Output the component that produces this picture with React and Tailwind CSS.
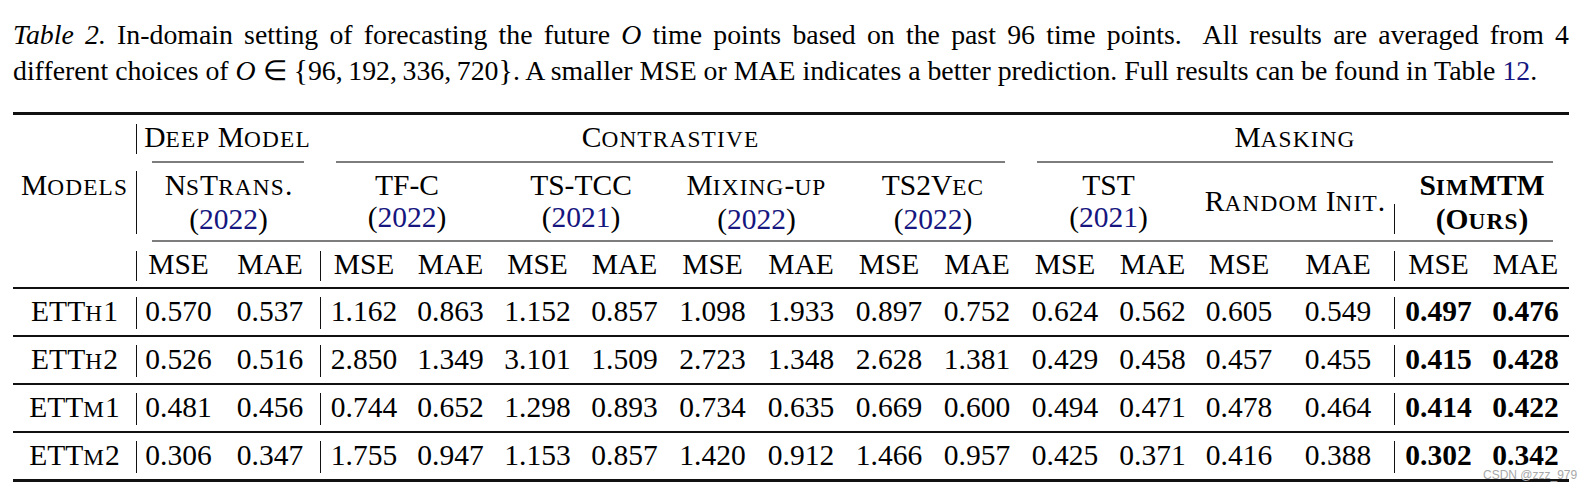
import clsx from "clsx";

const GRID =
  "grid grid-cols-[123px_84px_100px_87px_87px_87px_87px_89px_88px_88px_88px_88px_87px_86px_112px_88px_87px]";

const rows = [
  ["ETTh1", ["0.570", "0.537", "1.162", "0.863", "1.152", "0.857", "1.098", "1.933", "0.897", "0.752", "0.624", "0.562", "0.605", "0.549", "0.497", "0.476"]],
  ["ETTh2", ["0.526", "0.516", "2.850", "1.349", "3.101", "1.509", "2.723", "1.348", "2.628", "1.381", "0.429", "0.458", "0.457", "0.455", "0.415", "0.428"]],
  ["ETTm1", ["0.481", "0.456", "0.744", "0.652", "1.298", "0.893", "0.734", "0.635", "0.669", "0.600", "0.494", "0.471", "0.478", "0.464", "0.414", "0.422"]],
  ["ETTm2", ["0.306", "0.347", "1.755", "0.947", "1.153", "0.857", "1.420", "0.912", "1.466", "0.957", "0.425", "0.371", "0.416", "0.388", "0.302", "0.342"]],
];

const models = [
  { name: "NsTrans.", year: "2022" },
  { name: "TF-C", year: "2022" },
  { name: "TS-TCC", year: "2021" },
  { name: "Mixing-up", year: "2022" },
  { name: "TS2Vec", year: "2022" },
  { name: "TST", year: "2021" },
];

// lowercase letters become small capitals, the rest stays full size
function SC({ text }) {
  const parts = text.split(/([a-z]+)/);
  return (
    <span className="whitespace-pre">
      {parts.map((p, i) =>
        /^[a-z]+$/.test(p) ? (
          <span key={i} className="text-[0.79em] tracking-[0.05em]">{p.toUpperCase()}</span>
        ) : (
          <span key={i}>{p}</span>
        )
      )}
    </span>
  );
}

function Bar({ className }) {
  return <div className={clsx("w-px shrink-0 bg-[#111]", className)} />;
}

function Year({ y }) {
  return (
    <span>
      (<span className="text-[#161680]">{y}</span>)
    </span>
  );
}

function Rule({ className }) {
  return <div className={clsx("w-full bg-[#111]", className)} />;
}

function CRule({ span }) {
  return (
    <div className={clsx("px-[16px]", span)}>
      <div className="h-full bg-[#7d7d7d]" />
    </div>
  );
}

export default function App() {
  return (
    <div className="relative w-[1593px] h-[492px] overflow-hidden bg-white px-[13px] text-black [font-family:'Liberation_Serif',serif] text-[29.5px]">
      {/* caption */}
      <div className="w-[1556px] pt-[17px] text-[27.8px] leading-[35px]">
        <p className="text-justify [text-align-last:justify]">
          <i>Table 2.</i> In-domain setting of forecasting the future <i>O</i> time points based on the past 96 time
          points.&nbsp; All results are averaged from 4
        </p>
        <p className="whitespace-nowrap">
          different choices of <i>O</i> ∈ <span className="text-[1.08em]">{"{"}</span>96,{"\u2009"}192,{"\u2009"}336,
          {"\u2009"}720<span className="text-[1.08em]">{"}"}</span>. A smaller MSE or MAE indicates a better prediction.
          Full results can be found in Table <span className="text-[#161680]">12</span>.
        </p>
      </div>

      <div className="mt-[24px] w-[1556px]">
        <Rule className="h-[3px]" />

        {/* group header */}
        <div className={clsx(GRID, "h-[46px] leading-none")}>
          <div />
          <div className="col-span-2 flex">
            <Bar className="mt-[9px] mb-[7px]" />
            <div className="flex flex-1 items-center justify-center pr-[2px]">
              <SC text="Deep Model" />
            </div>
          </div>
          <div className="col-span-8 flex items-center justify-center">
            <SC text="Contrastive" />
          </div>
          <div className="col-span-6 flex items-center justify-center">
            <SC text="Masking" />
          </div>
        </div>

        <div className={clsx(GRID, "h-[2px]")}>
          <div />
          <CRule span="col-span-2" />
          <CRule span="col-span-8" />
          <CRule span="col-span-6" />
        </div>

        {/* model names */}
        <div className={clsx(GRID, "h-[77px] leading-[32px]")}>
          <div className="flex justify-center pt-[6px]">
            <SC text="Models" />
          </div>
          {models.map((m, i) => (
            <div key={m.name} className="col-span-2 flex">
              {i === 0 && <Bar className="mt-[8px] mb-[6px]" />}
              <div className="flex flex-1 flex-col items-center pt-[6px]">
                <SC text={m.name} />
                <Year y={m.year} />
              </div>
            </div>
          ))}
          <div className="col-span-2 flex items-center justify-center">
            <SC text="Random Init." />
          </div>
          <div className="col-span-2 flex">
            <Bar className="mt-[41px] mb-[6px]" />
            <div className="flex flex-1 flex-col items-center pt-[6px] font-bold">
              <SC text="SimMTM" />
              <SC text="(Ours)" />
            </div>
          </div>
        </div>

        <div className={clsx(GRID, "h-[2px]")}>
          <div />
          <CRule span="col-span-16" />
        </div>

        {/* MSE / MAE */}
        <div className={clsx(GRID, "h-[45px] leading-none")}>
          <div />
          {Array.from({ length: 16 }).map((_, i) => (
            <div key={i} className="flex">
              {(i === 0 || i === 2 || i === 14) && <Bar className="mt-[9px] mb-[6px]" />}
              <div className="flex flex-1 items-center justify-center">{i % 2 === 0 ? "MSE" : "MAE"}</div>
            </div>
          ))}
        </div>

        <Rule className="h-[2px]" />

        {rows.map(([name, vals], r) => (
          <div key={name}>
            <div className={clsx(GRID, "h-[46px] leading-none")}>
              <div className="flex items-center justify-center">
                <SC text={name} />
              </div>
              {vals.map((v, i) => (
                <div key={i} className="flex">
                  {(i === 0 || i === 2 || i === 14) && <Bar className="mt-[8px] mb-[6px]" />}
                  <div className={clsx("flex flex-1 items-center justify-center", i >= 14 && "font-bold")}>{v}</div>
                </div>
              ))}
            </div>
            <Rule className={r === rows.length - 1 ? "h-[3px]" : "h-[2px]"} />
          </div>
        ))}
      </div>

      <div className="absolute left-[1483px] top-[469px] [font-family:'Liberation_Sans',sans-serif] text-[12px] leading-none text-[#a8a8a8]">
        CSDN @zzz_979
      </div>
    </div>
  );
}
